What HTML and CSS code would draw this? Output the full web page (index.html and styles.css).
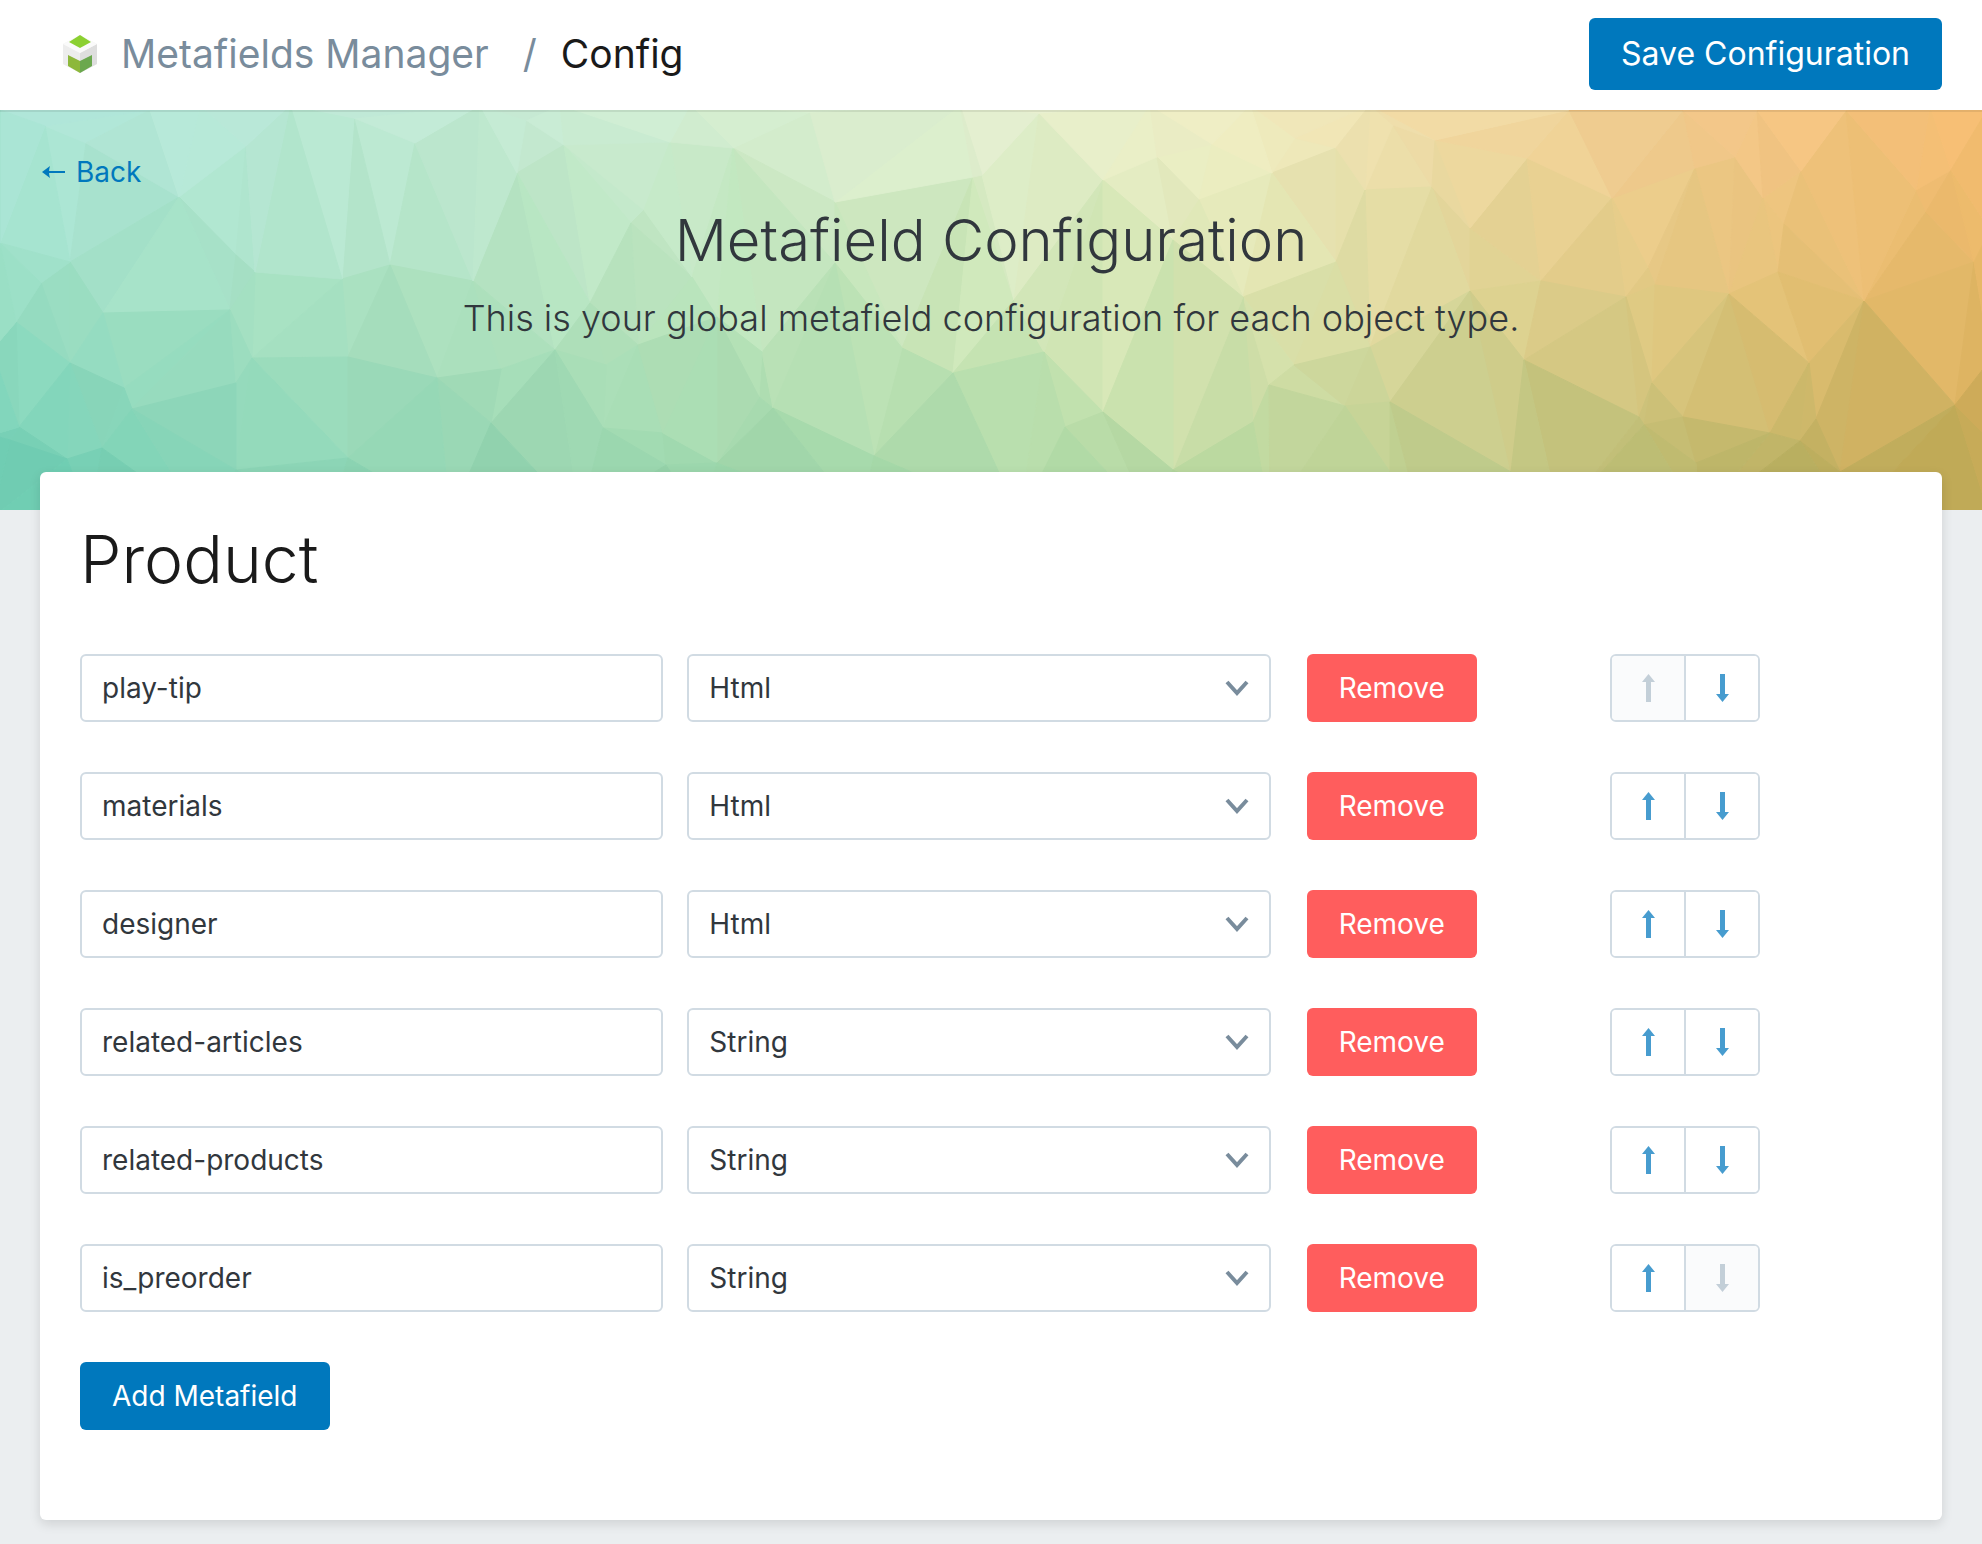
FILE: index.html
```html
<!DOCTYPE html>
<html lang="en">
<head>
    <meta charset="UTF-8">
    <meta name="viewport" content="width=device-width, initial-scale=1.0">
    <title>Metafields Manager / Config</title>
    <link rel="stylesheet" href="styles.css">
</head>
<body>

    <header class="topbar">
        <nav class="crumbs">
            <svg class="logo" viewBox="0 0 34 38" aria-hidden="true">
                <polygon points="17,0 34,9 34,29 17,38 0,29 0,9" fill="#f4f4f4"/>
                <polygon points="0,9 17,18 17,38 0,29" fill="#ededed"/>
                <polygon points="34,9 17,18 17,38 34,29" fill="#dedede"/>
                <polygon points="17,0 34,9 17,18 0,9" fill="#fafafa"/>
                <polygon points="17,0 28,7 17,13 6,7" fill="#8bd031"/>
                <polygon points="5,20 17,26 17,38 5,31" fill="#8db83b"/>
                <polygon points="29,20 17,26 17,38 29,31" fill="#6ba84e"/>
            </svg>
            <a href="#" class="crumb-app">Metafields Manager</a>
            <span class="crumb-slash">/</span>
            <span class="crumb-page">Config</span>
        </nav>
        <button class="btn btn-large" type="button">Save Configuration</button>
    </header>

    <section class="hero">
        <svg class="hero-bg" id="heroBg" viewBox="0 0 1982 400" preserveAspectRatio="xMidYMid slice" aria-hidden="true"></svg>
        <a href="#" class="back">
            <svg class="back-arrow" viewBox="0 0 24 14" aria-hidden="true"><path d="M0 7l8-6q-2 6 0 12zM6 6h17v2H6z"/></svg>
            Back
        </a>
        <h1 class="hero-title">Metafield Configuration</h1>
        <p class="hero-text">This is your global metafield configuration for each object type.</p>
    </section>

    <main class="card">
        <h2 class="card-title">Product</h2>
        <form id="fields"></form>
        <button class="btn" type="button">Add Metafield</button>
    </main>

    <script src="script.js"></script>
</body>
</html>
```
FILE: styles.css
```css
* {
    box-sizing: border-box;
}
body {
    margin: 0;
    background-color: #ebeef0;
    color: #31373d;
    font-family: Inter, "Liberation Sans", sans-serif;
    font-size: 28px;
    line-height: 40px;
}
a {
    text-decoration: none;
}
button, input, select {
    font: inherit;
}

/* top bar */
.topbar {
    position: relative;
    z-index: 1;
    display: flex;
    align-items: center;
    justify-content: space-between;
    height: 110px;
    padding: 0 40px 2px;
    background-color: white;
    box-shadow: 0 2px 0 rgba(0, 0, 0, 0.08);
}
.crumbs {
    display: flex;
    align-items: center;
    padding-left: 23px;
    font-size: 39px;
}
.logo {
    width: 34px;
    height: 38px;
    margin-right: 24px;
}
.crumb-app, .crumb-slash {
    color: #798c9c;
}
.crumb-slash {
    margin: 0 24px 0 34px;
}
.crumb-page {
    color: #1a1a1a;
}

/* buttons */
.btn {
    height: 68px;
    padding: 0 32px;
    border: none;
    border-radius: 6px;
    background-color: #0078bd;
    color: white;
    cursor: pointer;
}
.btn-large {
    height: 72px;
    font-size: 32px;
}
.btn-remove {
    background-color: #ff5d5d;
}

/* hero */
.hero {
    position: relative;
    height: 400px;
    padding: 42px 40px 0;
    text-align: center;
}
.hero-bg {
    position: absolute;
    top: 0;
    left: 0;
    z-index: -1;
    width: 100%;
    height: 100%;
}
.back {
    display: flex;
    align-items: center;
    width: max-content;
    color: #0078bd;
}
.back-arrow {
    width: 24px;
    height: 14px;
    margin: 0 10px 0 2px;
    fill: #0078bd;
}
.hero-title {
    margin: 8px 0 0;
    font-size: 58px;
    font-weight: 300;
    line-height: 80px;
}
.hero-text {
    margin: 12px 0 0;
    font-size: 36px;
    font-weight: 300;
    line-height: 52px;
}

/* card */
.card {
    position: relative;
    margin: -38px 40px 24px;
    padding: 40px 40px 90px;
    border-radius: 6px;
    background-color: white;
    box-shadow: 0 4px 12px rgba(0, 0, 0, 0.12);
}
.card-title {
    margin: 0 0 48px;
    color: #1a1a1a;
    font-size: 66px;
    font-weight: 300;
    line-height: 94px;
}
.row {
    display: grid;
    grid-template-columns: 4fr 4fr 2fr 2fr;
    margin-bottom: 50px;
}
.field {
    height: 68px;
    margin-right: 24px;
    padding: 0 20px;
    border: 2px solid #d1dbe3;
    border-radius: 6px;
    background-color: white;
    color: #31373d;
}
.select {
    display: grid;
    align-items: center;
    margin-right: 24px;
}
.select .field {
    grid-area: 1 / 1;
    width: 100%;
    margin: 0;
    appearance: none;
}
.chevron {
    grid-area: 1 / 1;
    justify-self: end;
    width: 24px;
    height: 16px;
    margin-right: 22px;
    fill: none;
    stroke: #798c9c;
    stroke-width: 4;
    pointer-events: none;
}
.cell {
    padding-left: 12px;
}
.move {
    display: flex;
    width: 150px;
    height: 68px;
    border: 2px solid #d1dbe3;
    border-radius: 6px;
    overflow: hidden;
}
.move button {
    display: flex;
    flex: 1;
    align-items: center;
    justify-content: center;
    padding: 0;
    border: none;
    background-color: white;
    color: #479ccf;
    cursor: pointer;
}
.move button + button {
    border-left: 2px solid #d1dbe3;
}
.move button:disabled {
    background-color: #fafbfc;
    color: #c3cfd8;
    cursor: default;
}
.arrow {
    width: 13px;
    height: 28px;
    fill: currentColor;
}
```
FILE: script.js
```js
// metafield rows
let fields = [
    ["play-tip", "Html"],
    ["materials", "Html"],
    ["designer", "Html"],
    ["related-articles", "String"],
    ["related-products", "String"],
    ["is_preorder", "String"]
];

document.getElementById("fields").innerHTML = fields.map(([name, type], i) => `
    <div class="row">
        <input class="field" type="text" value="${name}" aria-label="Metafield name">
        <div class="select">
            <select class="field" aria-label="Metafield type">
                <option ${type === "Html" ? "selected" : ""}>Html</option>
                <option ${type === "String" ? "selected" : ""}>String</option>
            </select>
            <svg class="chevron" viewBox="0 0 24 16" aria-hidden="true"><path d="M2 2l10 11L22 2"/></svg>
        </div>
        <div class="cell"><button class="btn btn-remove" type="button">Remove</button></div>
        <div class="cell">
            <div class="move">
                <button type="button" aria-label="Move up" ${i === 0 ? "disabled" : ""}>
                    <svg class="arrow" viewBox="0 0 13 28"><path d="M6.5 0L13 8H9v20H4V8H0z"/></svg>
                </button>
                <button type="button" aria-label="Move down" ${i === fields.length - 1 ? "disabled" : ""}>
                    <svg class="arrow" viewBox="0 0 13 28"><path d="M6.5 28l6.5-8H9V0H4v20H0z"/></svg>
                </button>
            </div>
        </div>
    </div>`).join("");

// low poly background of the hero
let points = [
    [45,16],[86,33],[246,36],[179,87],[70,152],[354,8],[415,33],[342,169],[390,155],[473,171],[517,63],[526,10],
    [564,35],[733,38],[810,2],[973,67],[644,100],[631,113],[692,167],[835,92],[590,193],[236,145],[255,162],[41,173],
    [103,203],[230,200],[16,212],[70,253],[124,278],[132,299],[252,248],[236,273],[348,247],[437,268],[501,259],
    [555,240],[606,255],[638,235],[762,242],[902,238],[953,263],[759,287],[773,298],[663,323],[491,313],[603,318],
    [348,348],[102,338],[19,317],[10,330],[67,349],[236,360],[874,346],[666,355],[717,353],[835,153],[670,32],[717,207],
    [1039,3],[982,65],[1103,70],[1157,47],[1212,34],[1295,28],[1272,63],[1336,38],[1393,15],[1365,80],[1432,77],
    [1199,90],[1336,152],[1243,187],[1470,118],[1470,181],[1541,171],[1612,88],[1527,48],[1695,58],[1735,47],
    [1763,88],[1801,61],[1784,114],[1648,158],[1655,175],[1626,187],[1729,184],[1778,162],[1864,191],[1926,102],
    [1916,80],[1951,60],[1974,152],[1103,302],[1044,242],[1065,317],[1253,312],[1269,275],[1294,255],[1370,237],
    [1345,296],[1390,292],[1524,250],[1652,273],[1639,307],[1644,315],[1683,307],[1770,323],[1800,331],[1816,309],
    [1809,253],[1955,295],[1173,360],[1390,362],[1511,362],[1696,353],[1840,362],[1014,190],[1173,130],[1435,30],
    [0,0],[150,0],[200,-5],[290,-5],[480,-5],[560,-5],[690,-5],[960,-5],[1150,-5],[1250,-5],[1370,-5],[1569,0],
    [1683,0],[1757,0],[1846,0],[1930,-5],[1990,-5],[0,133],[-8,240],[-8,325],[-8,408],[90,408],[200,408],[330,408],
    [450,408],[580,408],[700,408],[860,408],[1020,408],[1150,408],[1270,408],[1420,408],[1560,408],[1700,408],
    [1850,408],[1990,408],[1990,250],[1990,120],[1990,330]
];

// colours at even steps across the hero: top, middle and bottom
let shades = [
    ["b0e8dc", "bbe9da", "c6ebd6", "d5edd0", "e6f0d3", "f1eec4", "f2d7a0", "f6c88a", "f7bd72"],
    ["98dec4", "a4e0c2", "b0e2be", "bce4ba", "cbe6b6", "dae4b0", "dcd291", "e2c47a", "e3b563"],
    ["66cab0", "84d2b4", "8fd2ae", "98d4a8", "a6d7a6", "b5d79d", "b6c482", "b6b264", "baa450"]
].map(row => row.map(hex => [0, 2, 4].map(i => parseInt(hex.substr(i, 2), 16))));

function mix(a, b, t) {
    return a.map((v, i) => v + (b[i] - v) * t);
}

function shadeAt(x, y) {
    let cx = Math.min(Math.max(x / 1982, 0), 0.999) * 8;
    let cy = Math.min(Math.max(y / 400, 0), 0.999) * 2;
    let i = Math.floor(cx), j = Math.floor(cy);
    return mix(mix(shades[j][i], shades[j][i + 1], cx - i), mix(shades[j + 1][i], shades[j + 1][i + 1], cx - i), cy - j);
}

function circle(a, b, c) {
    let d = 2 * (a[0] * (b[1] - c[1]) + b[0] * (c[1] - a[1]) + c[0] * (a[1] - b[1]));
    let sa = a[0] * a[0] + a[1] * a[1], sb = b[0] * b[0] + b[1] * b[1], sc = c[0] * c[0] + c[1] * c[1];
    let x = (sa * (b[1] - c[1]) + sb * (c[1] - a[1]) + sc * (a[1] - b[1])) / d;
    let y = (sa * (c[0] - b[0]) + sb * (a[0] - c[0]) + sc * (b[0] - a[0])) / d;
    return { p: [a, b, c], x, y, r: Math.hypot(a[0] - x, a[1] - y) };
}

function triangulate(points) {
    let tris = [circle([-9000, -8000], [11000, -8100], [1000, 12000])];
    points.forEach(pt => {
        let edges = [];
        tris = tris.filter(t => {
            if (Math.hypot(pt[0] - t.x, pt[1] - t.y) >= t.r) return true;
            edges.push([t.p[0], t.p[1]], [t.p[1], t.p[2]], [t.p[2], t.p[0]]);
            return false;
        });
        edges.filter(e => !edges.some(f => f !== e && f.includes(e[0]) && f.includes(e[1])))
            .forEach(e => tris.push(circle(e[0], e[1], pt)));
    });
    return tris;
}

// points are squashed before the triangulation so the triangles come out tall
let tris = triangulate(points.map(([x, y]) => [x, y * 0.6]));
document.getElementById("heroBg").innerHTML = tris.map(t => {
    let x = (t.p[0][0] + t.p[1][0] + t.p[2][0]) / 3;
    let y = (t.p[0][1] + t.p[1][1] + t.p[2][1]) / 1.8;
    let light = Math.sin(x * 12.9 + y * 78.2) * 2;
    let fill = `rgb(${shadeAt(x, y).map(v => Math.round(v + light)).join()})`;
    return `<polygon points="${t.p.map(p => p[0] + "," + p[1] / 0.6).join(" ")}" fill="${fill}" stroke="${fill}"/>`;
}).join("");
```
